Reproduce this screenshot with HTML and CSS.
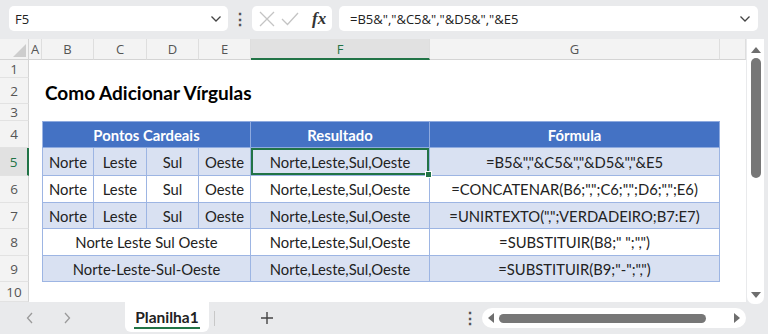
FILE: index.html
```html
<!DOCTYPE html>
<html lang="pt">
<head>
    <meta charset="UTF-8">
    <title>Como Adicionar Vírgulas</title>
    <link rel="stylesheet" href="styles.css">
</head>
<body>
    <div class="topbar">
        <div class="name-box">
            <span>F5</span>
            <svg class="chev" width="12" height="8" viewBox="0 0 12 8"><path d="M1.5 1.5 L6 6 L10.5 1.5" fill="none" stroke="#444" stroke-width="1.3"/></svg>
        </div>
        <div class="vdots">&#8942;</div>
        <div class="fx-box">
            <svg width="20" height="20" viewBox="0 0 20 20"><path d="M3 3 L17 17 M17 3 L3 17" stroke="#c4c4c4" stroke-width="1.3"/></svg>
            <svg width="20" height="20" viewBox="0 0 20 20"><path d="M2 10 L7.5 15.5 L18 4" fill="none" stroke="#c4c4c4" stroke-width="1.3"/></svg>
            <span class="fx">fx</span>
        </div>
        <div class="formula-input">
            <span>=B5&amp;","&amp;C5&amp;","&amp;D5&amp;","&amp;E5</span>
            <svg class="chev" width="12" height="8" viewBox="0 0 12 8"><path d="M1.5 1.5 L6 6 L10.5 1.5" fill="none" stroke="#444" stroke-width="1.3"/></svg>
        </div>
    </div>

    <div class="main">
        <div class="grid">
            <!-- en-tête des colonnes -->
            <div class="corner"><span class="tri"></span></div>
            <div class="ch">A</div>
            <div class="ch">B</div>
            <div class="ch">C</div>
            <div class="ch">D</div>
            <div class="ch">E</div>
            <div class="ch ch-sel">F</div>
            <div class="ch">G</div>
            <div class="ch"></div>

            <!-- ligne 1 -->
            <div class="rh">1</div>
            <div class="span8"></div>

            <!-- ligne 2 -->
            <div class="rh">2</div>
            <div></div>
            <div class="title">Como Adicionar Vírgulas</div>

            <!-- ligne 3 -->
            <div class="rh">3</div>
            <div class="span8"></div>

            <!-- ligne 4 -->
            <div class="rh">4</div>
            <div></div>
            <div class="c th first span4">Pontos Cardeais</div>
            <div class="c th">Resultado</div>
            <div class="c th">Fórmula</div>
            <div></div>

            <!-- ligne 5 -->
            <div class="rh rh-sel">5</div>
            <div></div>
            <div class="c alt first">Norte</div>
            <div class="c alt">Leste</div>
            <div class="c alt">Sul</div>
            <div class="c alt">Oeste</div>
            <div class="c alt selected">Norte,Leste,Sul,Oeste<span class="handle"></span></div>
            <div class="c alt">=B5&amp;","&amp;C5&amp;","&amp;D5&amp;","&amp;E5</div>
            <div></div>

            <!-- ligne 6 -->
            <div class="rh">6</div>
            <div></div>
            <div class="c first">Norte</div>
            <div class="c">Leste</div>
            <div class="c">Sul</div>
            <div class="c">Oeste</div>
            <div class="c">Norte,Leste,Sul,Oeste</div>
            <div class="c">=CONCATENAR(B6;",";C6;",";D6;",";E6)</div>
            <div></div>

            <!-- ligne 7 -->
            <div class="rh">7</div>
            <div></div>
            <div class="c alt first">Norte</div>
            <div class="c alt">Leste</div>
            <div class="c alt">Sul</div>
            <div class="c alt">Oeste</div>
            <div class="c alt">Norte,Leste,Sul,Oeste</div>
            <div class="c alt">=UNIRTEXTO(",";VERDADEIRO;B7:E7)</div>
            <div></div>

            <!-- ligne 8 -->
            <div class="rh">8</div>
            <div></div>
            <div class="c first span4">Norte Leste Sul Oeste</div>
            <div class="c">Norte,Leste,Sul,Oeste</div>
            <div class="c">=SUBSTITUIR(B8;" ";",")</div>
            <div></div>

            <!-- ligne 9 -->
            <div class="rh">9</div>
            <div></div>
            <div class="c alt first span4">Norte-Leste-Sul-Oeste</div>
            <div class="c alt">Norte,Leste,Sul,Oeste</div>
            <div class="c alt">=SUBSTITUIR(B9;"-";",")</div>
            <div></div>

            <!-- ligne 10 -->
            <div class="rh">10</div>
            <div class="span8"></div>
        </div>

        <div class="vscroll">
            <div class="vtrack">
                <span class="tri-up"></span>
                <span class="vthumb"></span>
                <span class="tri-down"></span>
            </div>
        </div>
    </div>

    <div class="tabbar">
        <div class="tab-nav">
            <svg width="10" height="14" viewBox="0 0 10 14"><path d="M7 2 L2.5 7 L7 12" fill="none" stroke="#9a9a9a" stroke-width="1.3"/></svg>
            <svg width="10" height="14" viewBox="0 0 10 14"><path d="M3 2 L7.5 7 L3 12" fill="none" stroke="#9a9a9a" stroke-width="1.3"/></svg>
        </div>
        <div class="tab"><span>Planilha1</span></div>
        <div class="tab-sep"></div>
        <div class="add-sheet">
            <svg width="14" height="14" viewBox="0 0 14 14"><path d="M7 1 V13 M1 7 H13" stroke="#444" stroke-width="1.4"/></svg>
        </div>
        <div class="spacer"></div>
        <div class="hdots">&#8942;</div>
        <div class="hscroll">
            <span class="tri-left"></span>
            <span class="hthumb"></span>
            <span class="tri-right"></span>
        </div>
    </div>
</body>
</html>
```

FILE: styles.css
```css
body {
    margin: 0;
    width: 768px;
    height: 334px;
    overflow: hidden;
    background: #e9eaec;
    font-family: Lato, 'Noto Sans', sans-serif;
    color: #222;
}
.topbar {
    height: 39px;
    display: flex;
    align-items: flex-start;
    padding: 6px 0 0 9px;
    box-sizing: border-box;
}
.name-box, .fx-box, .formula-input {
    height: 25px;
    background: white;
    border-radius: 5px;
    display: flex;
    align-items: center;
    box-sizing: border-box;
    font-family: 'Open Sans', sans-serif;
    font-size: 13px;
    color: #222;
}
.name-box {
    width: 219px;
    padding: 0 6px 0 6px;
    justify-content: space-between;
}
.vdots {
    width: 24px;
    text-align: center;
    font-size: 16px;
    font-weight: bold;
    line-height: 25px;
    color: #555;
}
.fx-box {
    width: 80px;
    padding: 0 0 0 5px;
    gap: 3px;
}
.fx {
    font-family: 'Liberation Serif', serif;
    font-style: italic;
    font-weight: bold;
    font-size: 17px;
    color: #333;
    margin-left: 9px;
}
.formula-input {
    width: 419px;
    margin-left: 7px;
    padding: 0 7px 0 11px;
    justify-content: space-between;
}

.main {
    display: flex;
    height: 263px;
}
.grid {
    width: 746px;
    display: grid;
    grid-template-columns: 29px 13px 52px 53px 52px 52px 179px 290px 26px;
    grid-template-rows: 21px 18px 26px 17px 27px 28px 27px 26px 27px 26px 20px;
    background: white;
}
.corner, .ch {
    background: #f3f3f3;
    border-bottom: 1px solid #d4d4d4;
    box-sizing: border-box;
}
.corner {
    position: relative;
    border-right: 1px solid #d4d4d4;
}
.tri {
    position: absolute;
    right: 2px;
    bottom: 2px;
    width: 0;
    height: 0;
    border-left: 13px solid transparent;
    border-bottom: 13px solid #cdcdcd;
}
.ch {
    border-right: 1px solid #dedede;
    font-family: 'Open Sans', sans-serif;
    font-size: 13px;
    color: #555;
    display: flex;
    align-items: center;
    justify-content: center;
}
.ch-sel {
    background: #e1e1e1;
    color: #217346;
    border-bottom: 2px solid #217346;
}
.rh {
    background: #f3f3f3;
    border-right: 1px solid #d4d4d4;
    border-bottom: 1px solid #e2e2e2;
    box-sizing: border-box;
    font-family: 'Open Sans', sans-serif;
    font-size: 13.5px;
    color: #555;
    display: flex;
    align-items: center;
    justify-content: center;
}
.rh-sel {
    background: #e1e1e1;
    color: #217346;
    border-right: 2px solid #217346;
}
.span8 {
    grid-column: span 8;
}
.span4 {
    grid-column: span 4;
}
.title {
    grid-column: span 7;
    font-weight: bold;
    font-size: 19px;
    display: flex;
    align-items: center;
    padding-left: 3px;
    padding-top: 3px;
    color: #000;
}
.c {
    display: flex;
    align-items: center;
    justify-content: center;
    font-size: 14.8px;
    color: #222;
    white-space: nowrap;
    border-right: 1px solid #9db5e3;
    border-bottom: 1px solid #9db5e3;
    box-sizing: border-box;
    background: white;
}
.first {
    border-left: 1px solid #9db5e3;
}
.alt {
    background: #d9e1f2;
}
.th {
    background: #4472c4;
    color: white;
    font-weight: bold;
    border-top: 1px solid #8eaadf;
    border-right-color: #8eaadf;
    border-bottom-color: #8eaadf;
}
.selected {
    position: relative;
    box-shadow: inset 0 0 0 2px #217346;
}
.handle {
    position: absolute;
    right: -3px;
    bottom: -3px;
    width: 5px;
    height: 5px;
    background: #217346;
    border: 1px solid white;
}

.vscroll {
    width: 22px;
    padding-left: 1px;
    box-sizing: border-box;
}
.vtrack {
    width: 17px;
    height: 265px;
    background: white;
    border-radius: 0 0 7px 7px;
    display: flex;
    flex-direction: column;
    align-items: center;
    padding-top: 8px;
    box-sizing: border-box;
}
.tri-up, .tri-down {
    width: 0;
    height: 0;
    border-left: 5px solid transparent;
    border-right: 5px solid transparent;
}
.tri-up {
    border-bottom: 6px solid #6e6e6e;
}
.tri-down {
    border-top: 6px solid #6e6e6e;
    margin-top: auto;
    margin-bottom: 6px;
}
.vthumb {
    width: 10px;
    height: 120px;
    margin-top: 5px;
    background: #777;
    border-radius: 5px;
}

.tabbar {
    height: 32px;
    display: flex;
    align-items: center;
}
.tab-nav {
    width: 125px;
    display: flex;
    gap: 27px;
    padding-left: 25px;
    box-sizing: border-box;
}
.tab {
    width: 84px;
    height: 30px;
    align-self: flex-start;
    background: white;
    border-radius: 0 0 6px 6px;
    display: flex;
    justify-content: center;
    align-items: center;
}
.tab span {
    font-weight: bold;
    font-size: 15.5px;
    color: #222;
    padding: 2px 1px 1px;
    border-bottom: 2px solid #217346;
}
.tab-sep {
    width: 1px;
    height: 15px;
    background: #c8c8c8;
    margin-left: 5px;
}
.add-sheet {
    margin-left: 45px;
    display: flex;
}
.spacer {
    flex: 1;
}
.hdots {
    font-size: 16px;
    font-weight: bold;
    color: #555;
    width: 20px;
    text-align: center;
    margin-right: 2px;
}
.hscroll {
    width: 264px;
    height: 20px;
    margin-right: 22px;
    background: white;
    border-radius: 10px;
    display: flex;
    align-items: center;
    padding: 0 6px 0 6px;
    box-sizing: border-box;
}
.tri-left, .tri-right {
    width: 0;
    height: 0;
    border-top: 5px solid transparent;
    border-bottom: 5px solid transparent;
}
.tri-left {
    border-right: 6px solid #6e6e6e;
}
.tri-right {
    border-left: 6px solid #6e6e6e;
    margin-left: auto;
}
.hthumb {
    width: 207px;
    height: 9px;
    margin-left: 5px;
    background: #777;
    border-radius: 5px;
}
```
